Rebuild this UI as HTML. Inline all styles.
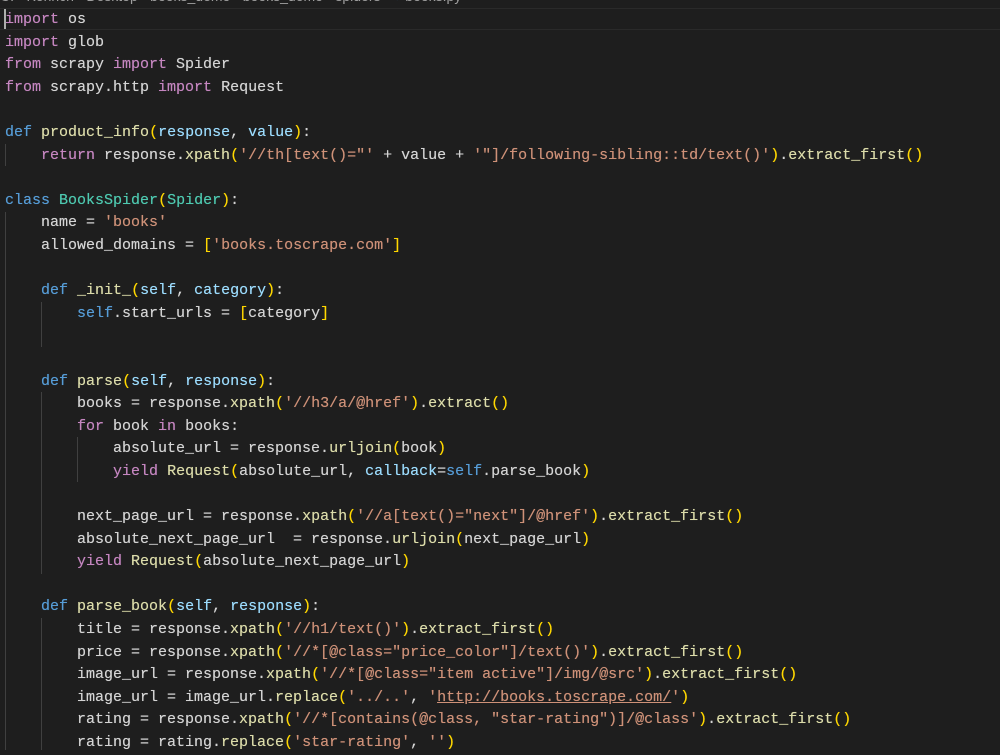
<!DOCTYPE html>
<html><head><meta charset="utf-8"><style>
html,body{margin:0;padding:0;background:#1e1e1e;width:1000px;height:750px;overflow:hidden}
.bc{position:absolute;top:-12px;left:0;font:14px "Liberation Sans",sans-serif;color:#a0a0a0;white-space:pre}
.ed{position:absolute;top:9px;left:5px;font:15px/22.6px "Liberation Mono",monospace;color:#d4d4d4;white-space:pre;text-shadow:0 0 0.4px currentColor}
.hl{position:absolute;top:8px;left:0;width:1000px;height:20px;border-top:1px solid #2a2a2a;border-bottom:1px solid #2a2a2a}
.cur{position:absolute;top:9px;left:4px;width:2px;height:20px;background:#aeafad}
.g{position:absolute;width:1px;background:#404040}
.k{color:#c586c0}.d{color:#569cd6}.f{color:#dcdcaa}.p{color:#9cdcfe}.s{color:#ce9178}.c{color:#4ec9b0}.y{color:#ffd700}.m{color:#da70d6}.u{text-decoration:underline}
</style></head><body>
<div class="bc">C: › Kennch › Desktop › books_demo › books_demo › spiders › <span style="color:#3794ff">●</span> books.py</div>
<div class="hl"></div>
<div class="g" style="left:5px;top:144px;height:22px"></div>
<div class="g" style="left:5px;top:212px;height:538px"></div>
<div class="g" style="left:41px;top:302px;height:45px"></div>
<div class="g" style="left:41px;top:392px;height:182px"></div>
<div class="g" style="left:77px;top:437px;height:45px"></div>
<div class="g" style="left:41px;top:618px;height:132px"></div>
<div class="ed"><span class="k">import</span> os
<span class="k">import</span> glob
<span class="k">from</span> scrapy <span class="k">import</span> Spider
<span class="k">from</span> scrapy.http <span class="k">import</span> Request

<span class="d">def</span> <span class="f">product_info</span><span class="y">(</span><span class="p">response</span>, <span class="p">value</span><span class="y">)</span>:
    <span class="k">return</span> response.<span class="f">xpath</span><span class="y">(</span><span class="s">'//th[text()="'</span> + value + <span class="s">'"]/following-sibling::td/text()'</span><span class="y">)</span>.<span class="f">extract_first</span><span class="y">()</span>

<span class="d">class</span> <span class="c">BooksSpider</span><span class="y">(</span><span class="c">Spider</span><span class="y">)</span>:
    name = <span class="s">'books'</span>
    allowed_domains = <span class="y">[</span><span class="s">'books.toscrape.com'</span><span class="y">]</span>

    <span class="d">def</span> <span class="f">_init_</span><span class="y">(</span><span class="p">self</span>, <span class="p">category</span><span class="y">)</span>:
        <span class="d">self</span>.start_urls = <span class="y">[</span>category<span class="y">]</span>


    <span class="d">def</span> <span class="f">parse</span><span class="y">(</span><span class="p">self</span>, <span class="p">response</span><span class="y">)</span>:
        books = response.<span class="f">xpath</span><span class="y">(</span><span class="s">'//h3/a/@href'</span><span class="y">)</span>.<span class="f">extract</span><span class="y">()</span>
        <span class="k">for</span> book <span class="k">in</span> books:
            absolute_url = response.<span class="f">urljoin</span><span class="y">(</span>book<span class="y">)</span>
            <span class="k">yield</span> <span class="f">Request</span><span class="y">(</span>absolute_url, <span class="p">callback</span>=<span class="d">self</span>.parse_book<span class="y">)</span>

        next_page_url = response.<span class="f">xpath</span><span class="y">(</span><span class="s">'//a[text()="next"]/@href'</span><span class="y">)</span>.<span class="f">extract_first</span><span class="y">()</span>
        absolute_next_page_url  = response.<span class="f">urljoin</span><span class="y">(</span>next_page_url<span class="y">)</span>
        <span class="k">yield</span> <span class="f">Request</span><span class="y">(</span>absolute_next_page_url<span class="y">)</span>

    <span class="d">def</span> <span class="f">parse_book</span><span class="y">(</span><span class="p">self</span>, <span class="p">response</span><span class="y">)</span>:
        title = response.<span class="f">xpath</span><span class="y">(</span><span class="s">'//h1/text()'</span><span class="y">)</span>.<span class="f">extract_first</span><span class="y">()</span>
        price = response.<span class="f">xpath</span><span class="y">(</span><span class="s">'//*[@class="price_color"]/text()'</span><span class="y">)</span>.<span class="f">extract_first</span><span class="y">()</span>
        image_url = response.<span class="f">xpath</span><span class="y">(</span><span class="s">'//*[@class="item active"]/img/@src'</span><span class="y">)</span>.<span class="f">extract_first</span><span class="y">()</span>
        image_url = image_url.<span class="f">replace</span><span class="y">(</span><span class="s">'../..'</span>, <span class="s">'<span class="u">http://books.toscrape.com/</span>'</span><span class="y">)</span>
        rating = response.<span class="f">xpath</span><span class="y">(</span><span class="s">'//*[contains(@class, "star-rating")]/@class'</span><span class="y">)</span>.<span class="f">extract_first</span><span class="y">()</span>
        rating = rating.<span class="f">replace</span><span class="y">(</span><span class="s">'star-rating'</span>, <span class="s">''</span><span class="y">)</span></div>
<div class="cur"></div>
</body></html>
